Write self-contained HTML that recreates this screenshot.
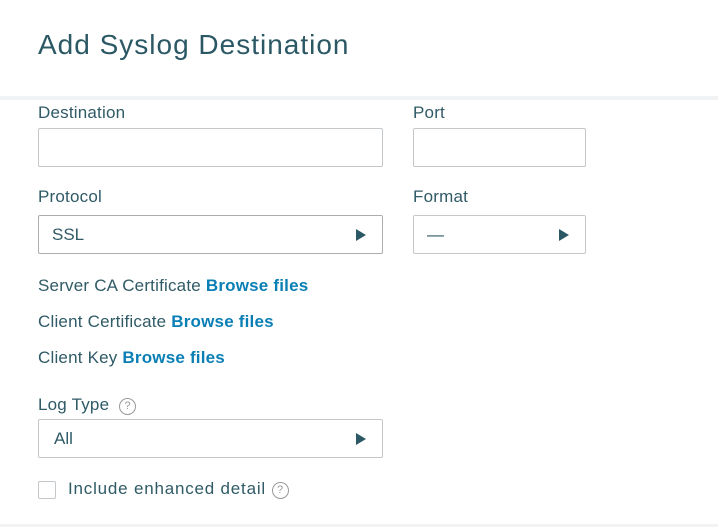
<!DOCTYPE html>
<html><head><style>
body{margin:0;width:718px;height:527px;background:#fff;font-family:"Liberation Sans",sans-serif;color:#2f5a66;position:relative;overflow:hidden}
.a{position:absolute}
.t{font-size:28px;left:38px;top:29px;color:#2b5864;letter-spacing:1px}
.band{left:0;top:96px;width:718px;height:4px;background:#f2f3f4}
.l{font-size:17px;letter-spacing:0.2px}
.box{border:1px solid #c4c8ca;border-radius:2px;box-sizing:border-box;background:#fff}
.sel{font-size:17px;line-height:39px;padding-left:13px}
.tri{position:absolute;right:16px;top:13px;width:0;height:0;border-left:10px solid #2b5864;border-top:6px solid transparent;border-bottom:6px solid transparent}
.lk{color:#0a7fb5;font-weight:bold}
.q{display:inline-block;width:15px;height:15px;border:1.5px solid #999;border-radius:50%;font-size:11px;line-height:15px;text-align:center;color:#999;vertical-align:1px;box-sizing:content-box;letter-spacing:0}
</style></head><body>
<div class="a t">Add Syslog Destination</div>
<div class="a band"></div>
<div class="a l" style="left:38px;top:103px">Destination</div>
<div class="a box" style="left:38px;top:128px;width:345px;height:39px"></div>
<div class="a l" style="left:413px;top:103px">Port</div>
<div class="a box" style="left:413px;top:128px;width:173px;height:39px"></div>
<div class="a l" style="left:38px;top:187px">Protocol</div>
<div class="a box sel" style="left:38px;top:215px;width:345px;height:39px;border-color:#a9adaf;line-height:38px">SSL<span class="tri"></span></div>
<div class="a l" style="left:413px;top:187px">Format</div>
<div class="a box sel" style="left:413px;top:215px;width:173px;height:39px;line-height:38px">—<span class="tri"></span></div>
<div class="a l" style="left:38px;top:276px">Server CA Certificate <span class="lk">Browse files</span></div>
<div class="a l" style="left:38px;top:312px">Client Certificate <span class="lk">Browse files</span></div>
<div class="a l" style="left:38px;top:348px">Client Key <span class="lk">Browse files</span></div>
<div class="a l" style="left:38px;top:395px">Log Type &nbsp;<span class="q">?</span></div>
<div class="a box sel" style="left:38px;top:419px;width:345px;height:39px;padding-left:15px;line-height:38px">All<span class="tri"></span></div>
<div class="a box" style="left:38px;top:481px;width:18px;height:18px"></div>
<div class="a l" style="left:68px;top:479px;letter-spacing:0.8px">Include enhanced detail <span class="q">?</span></div>
<div class="a" style="left:0;top:524px;width:718px;height:3px;background:#f2f3f4"></div>
</body></html>
